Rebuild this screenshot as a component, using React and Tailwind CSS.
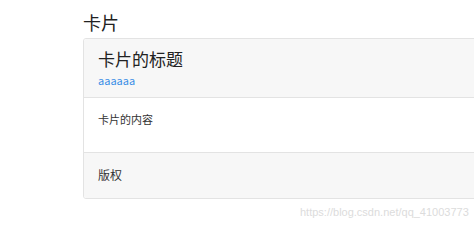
export default function App() {
  return (
    <div
      className="relative w-[474px] h-[224px] overflow-hidden bg-white"
      style={{ fontFamily: '"Noto Sans CJK SC", "Noto Sans", sans-serif' }}
    >
      <div className="pl-[83px] pt-[10px]">
        <h1 className="text-[18px] leading-[24px] text-[#222] h-[28px]">卡片</h1>
        <div className="w-[420px] border border-[#e3e3e3] rounded-[3px] overflow-hidden">
          <div className="h-[59px] bg-[#f7f7f7] border-b border-[#e3e3e3] px-[14px] pt-[9px]">
            <div className="text-[17px] leading-[22px] text-[#222]">卡片的标题</div>
            <div className="text-[11px] leading-[14px] mt-[3px] text-[#3a8ee6]">aaaaaa</div>
          </div>
          <div className="h-[55px] bg-white border-b border-[#e3e3e3] px-[14px] pt-[13px]">
            <div className="text-[11px] leading-[16px] text-[#333]">卡片的内容</div>
          </div>
          <div className="h-[45px] bg-[#f7f7f7] px-[14px] pt-[14px]">
            <div className="text-[12px] leading-[16px] text-[#333]">版权</div>
          </div>
        </div>
      </div>
      <div
        className="absolute left-[300px] top-[204px] text-[11px] text-[#dcdcdc]"
        style={{ fontFamily: '"Liberation Sans", Arial, sans-serif' }}
      >
        https://blog.csdn.net/qq_41003773
      </div>
    </div>
  );
}
